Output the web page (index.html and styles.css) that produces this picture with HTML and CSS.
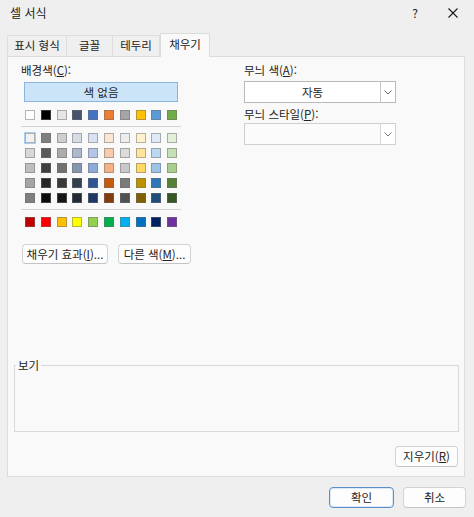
FILE: index.html
```html
<!DOCTYPE html>
<html lang="ko">
<head>
<meta charset="utf-8">
<title>셀 서식</title>
<link rel="stylesheet" href="styles.css">
</head>
<body>
<div class="dialog">
  <div class="titlebar">
    <span class="title">셀 서식</span>
    <span class="help">?</span>
    <span class="close"><svg width="10" height="10" viewBox="0 0 10 10"><path d="M0.5 0.5 L9.5 9.5 M9.5 0.5 L0.5 9.5" stroke="#1b1b1b" stroke-width="1.1" fill="none"/></svg></span>
  </div>
  <div class="tabs">
    <div class="tab t1">표시 형식</div>
    <div class="tab t2">글꼴</div>
    <div class="tab t3">테두리</div>
    <div class="tab active">채우기</div>
  </div>
  <div class="panel">
    <div class="top">
      <div class="left">
        <div class="label">배경색(<u>C</u>):</div>
        <div class="none-btn">색 없음</div>
        <div class="swatches row1">
          <span class="sw" style="background:#FFFFFF"></span>
          <span class="sw" style="background:#000000"></span>
          <span class="sw" style="background:#E7E6E6"></span>
          <span class="sw" style="background:#44546A"></span>
          <span class="sw" style="background:#4472C4"></span>
          <span class="sw" style="background:#ED7D31"></span>
          <span class="sw" style="background:#A5A5A5"></span>
          <span class="sw" style="background:#FFC000"></span>
          <span class="sw" style="background:#5B9BD5"></span>
          <span class="sw" style="background:#70AD47"></span>
        </div>
        <div class="sep"></div>
        <div class="swatches theme">
          <span class="sw selected" style="background:#F2F2F2"></span>
          <span class="sw" style="background:#7F7F7F"></span>
          <span class="sw" style="background:#D0CECE"></span>
          <span class="sw" style="background:#D6DCE4"></span>
          <span class="sw" style="background:#D9E2F3"></span>
          <span class="sw" style="background:#FBE5D5"></span>
          <span class="sw" style="background:#EDEDED"></span>
          <span class="sw" style="background:#FFF2CC"></span>
          <span class="sw" style="background:#DEEBF6"></span>
          <span class="sw" style="background:#E2EFD9"></span>

          <span class="sw" style="background:#D8D8D8"></span>
          <span class="sw" style="background:#595959"></span>
          <span class="sw" style="background:#AEABAB"></span>
          <span class="sw" style="background:#ADB9CA"></span>
          <span class="sw" style="background:#B4C6E7"></span>
          <span class="sw" style="background:#F7CBAC"></span>
          <span class="sw" style="background:#DBDBDB"></span>
          <span class="sw" style="background:#FEE599"></span>
          <span class="sw" style="background:#BDD7EE"></span>
          <span class="sw" style="background:#C5E0B3"></span>

          <span class="sw" style="background:#BFBFBF"></span>
          <span class="sw" style="background:#3F3F3F"></span>
          <span class="sw" style="background:#757070"></span>
          <span class="sw" style="background:#8496B0"></span>
          <span class="sw" style="background:#8EAADB"></span>
          <span class="sw" style="background:#F4B183"></span>
          <span class="sw" style="background:#C9C9C9"></span>
          <span class="sw" style="background:#FFD965"></span>
          <span class="sw" style="background:#9CC3E5"></span>
          <span class="sw" style="background:#A8D08D"></span>

          <span class="sw" style="background:#A5A5A5"></span>
          <span class="sw" style="background:#262626"></span>
          <span class="sw" style="background:#3A3838"></span>
          <span class="sw" style="background:#323F4F"></span>
          <span class="sw" style="background:#2F5496"></span>
          <span class="sw" style="background:#C55A11"></span>
          <span class="sw" style="background:#7B7B7B"></span>
          <span class="sw" style="background:#BF9000"></span>
          <span class="sw" style="background:#2E75B5"></span>
          <span class="sw" style="background:#538135"></span>

          <span class="sw" style="background:#7F7F7F"></span>
          <span class="sw" style="background:#0C0C0C"></span>
          <span class="sw" style="background:#171616"></span>
          <span class="sw" style="background:#222A35"></span>
          <span class="sw" style="background:#1F3864"></span>
          <span class="sw" style="background:#833C0B"></span>
          <span class="sw" style="background:#525252"></span>
          <span class="sw" style="background:#7F6000"></span>
          <span class="sw" style="background:#1E4E79"></span>
          <span class="sw" style="background:#375623"></span>
        </div>
        <div class="sep sep2"></div>
        <div class="swatches std">
          <span class="sw" style="background:#C00000"></span>
          <span class="sw" style="background:#FF0000"></span>
          <span class="sw" style="background:#FFC000"></span>
          <span class="sw" style="background:#FFFF00"></span>
          <span class="sw" style="background:#92D050"></span>
          <span class="sw" style="background:#00B050"></span>
          <span class="sw" style="background:#00B0F0"></span>
          <span class="sw" style="background:#0070C0"></span>
          <span class="sw" style="background:#002060"></span>
          <span class="sw" style="background:#7030A0"></span>
        </div>
        <div class="btnrow">
          <div class="btn fx">채우기 효과(<u>I</u>)...</div>
          <div class="btn more">다른 색(<u>M</u>)...</div>
        </div>
      </div>
      <div class="right">
        <div class="label">무늬 색(<u>A</u>):</div>
        <div class="combo">
          <span class="combo-text">자동</span>
          <span class="combo-arrow"><svg width="8" height="5" viewBox="0 0 8 5"><path d="M0.5 0.5 L4 4 L7.5 0.5" stroke="#666" stroke-width="1" fill="none"/></svg></span>
        </div>
        <div class="label label2">무늬 스타일(<u>P</u>):</div>
        <div class="combo disabled">
          <span class="combo-text"></span>
          <span class="combo-arrow"><svg width="8" height="5" viewBox="0 0 8 5"><path d="M0.5 0.5 L4 4 L7.5 0.5" stroke="#777" stroke-width="1" fill="none"/></svg></span>
        </div>
      </div>
    </div>
    <fieldset class="preview">
      <legend>보기</legend>
      <div class="preview-body"></div>
    </fieldset>
    <div class="clear-row"><div class="btn clear">지우기(<u>R</u>)</div></div>
  </div>
  <div class="footer">
    <div class="btn ok">확인</div>
    <div class="btn cancel">취소</div>
  </div>
</div>
</body>
</html>
```

FILE: styles.css
```css
* { box-sizing: border-box; }
html, body {
  margin: 0;
  padding: 0;
}
body {
  background: #efefef;
  font-family: "Noto Sans CJK KR", "Noto Sans", sans-serif;
  font-size: 11.5px;
  color: #222222;
}
u { text-decoration: underline; text-underline-offset: 1px; }

.dialog {
  width: 474px;
  height: 517px;
  display: flex;
  flex-direction: column;
  background: #efefef;
}

.titlebar {
  height: 33px;
  display: flex;
  align-items: flex-start;
  padding-top: 5px;
  line-height: 16px;
}
.title { flex: 1; padding-left: 10px; font-size: 12px; }
.help { margin-right: 30px; font-size: 12px; }
.close { margin-right: 16px; padding-top: 3px; display: flex; }

.tabs {
  height: 23px;
  display: flex;
  align-items: flex-end;
  padding-left: 7px;
}
.tab {
  height: 21px;
  line-height: 19px;
  text-align: center;
  border-top: 1px solid #dedede;
  border-right: 1px solid #dedede;
  background: #efefef;
}
.t1 { width: 60px; border-left: 1px solid #dedede; }
.t2 { width: 46px; }
.t3 { width: 47px; }
.tab.active {
  width: 50px;
  height: 24px;
  line-height: 21px;
  margin-bottom: -1px;
  background: #f9f9f9;
  border: 1px solid #dcdcdc;
  border-bottom: none;
  position: relative;
  z-index: 1;
}

.panel {
  margin-left: 7px;
  width: 458px;
  height: 421px;
  background: #f9f9f9;
  border: 1px solid #dcdcdc;
}

.top {
  display: flex;
  padding: 5px 0 0 13px;
}
.left { width: 223px; }
.right { width: 152px; }

.label { height: 16px; line-height: 16px; }

.none-btn {
  margin-top: 4px;
  margin-left: 3px;
  width: 154px;
  height: 20px;
  line-height: 18px;
  text-align: center;
  background: #cce4f7;
  border: 1px solid #8ab6dc;
}

.swatches {
  display: grid;
  grid-template-columns: repeat(10, 10px);
  column-gap: 5.8px;
  row-gap: 5px;
  margin-left: 4px;
}
.row1 { margin-top: 8px; }
.theme { margin-top: 6px; }
.std { margin-top: 7px; }
.sw {
  display: block;
  width: 10px;
  height: 10px;
  border: 1px solid rgba(110, 110, 110, 0.5);
}
.sw.selected {
  box-shadow: 0 0 0 1px #a9cdee;
}

.sep {
  margin-top: 6px;
  width: 160px;
  height: 1px;
  background: #d4d4d4;
}
.sep2 { margin-top: 6px; }

.btnrow {
  margin-top: 17px;
  display: flex;
  margin-left: 1px;
  gap: 10px;
}
.btn {
  height: 21px;
  line-height: 19px;
  text-align: center;
  background: #fdfdfd;
  border: 1px solid #d3d3d3;
  border-bottom-color: #c4c4c4;
  border-radius: 4px;
}
.btnrow .btn { height: 20px; line-height: 18px; }
.fx { width: 86px; }
.more { width: 73px; }

.combo {
  margin-top: 3px;
  height: 22px;
  display: flex;
  background: #ffffff;
  border: 1px solid #b9b9b9;
}
.combo-text {
  flex: 1;
  text-align: center;
  line-height: 20px;
}
.combo-arrow {
  width: 15px;
  border-left: 1px solid #c8c8c8;
  display: flex;
  align-items: center;
  justify-content: center;
}
.combo.disabled {
  margin-top: 1px;
  background: #fbfbfb;
  border-color: #cfcfcf;
}
.combo.disabled .combo-arrow { border-left-color: #d8d8d8; background: #ffffff; }
.label2 { margin-top: 3px; }

.preview {
  margin: 94px 0 0 6px;
  width: 445px;
  padding: 0;
  border: 1px solid #d9d9d9;
  min-inline-size: 0;
}
.preview legend {
  padding: 0 2px;
  margin-left: 1px;
  line-height: 14px;
}
.preview-body { height: 59px; }

.clear-row {
  margin-top: 14px;
  display: flex;
  justify-content: flex-end;
  padding-right: 6px;
}
.clear { width: 63px; }

.footer {
  margin-top: 10px;
  display: flex;
  justify-content: flex-end;
  gap: 9px;
  padding-right: 8px;
}
.ok {
  width: 65px;
  border: 1px solid #5c8fc6;
  box-shadow: inset 0 0 0 1px #dbe9f6;
}
.cancel { width: 63px; }
```
